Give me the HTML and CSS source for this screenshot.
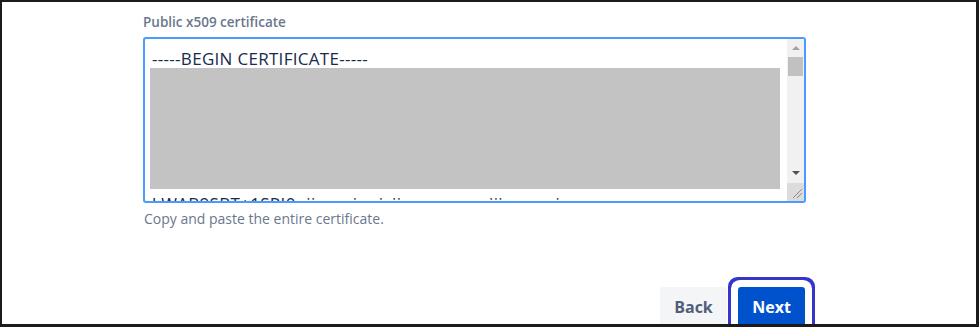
FILE: index.html
```html
<!DOCTYPE html>
<html>
<head>
    <link rel="stylesheet" href="styles.css">
</head>
<body>
    <div class="frame">
        <div class="form">
            <label class="field-label" for="cert">Public x509 certificate</label>
            <div class="cert-box">
                <div class="cert-text" id="cert">
                    <div class="line">-----BEGIN CERTIFICATE-----</div>
                    <!-- certificate body is blanked out in the screenshot -->
                    <div class="redacted"></div>
                    <div class="line line-cut">kWAB9SBT+1SRI0qjjyyypjppjyjjypyypyaqpjjjyypyq.j</div>
                </div>
                <div class="scrollbar">
                    <span class="arrow up"></span>
                    <span class="thumb"></span>
                    <span class="track"></span>
                    <span class="arrow down"></span>
                    <span class="grip">
                        <svg width="17" height="17" viewBox="0 0 17 17">
                            <path d="M6 15 L15 6 M10 15 L15 10" stroke="#8a8a8a" stroke-width="1" fill="none"/>
                        </svg>
                    </span>
                </div>
            </div>
            <p class="hint">Copy and paste the entire certificate.</p>
            <div class="actions">
                <button class="btn btn-back">Back</button>
                <button class="btn btn-next">Next</button>
            </div>
        </div>
    </div>
</body>
</html>
```

FILE: styles.css
```css
body {
    margin: 0;
    padding: 0;
    background: #fff;
    font-family: "Open Sans", "Noto Sans", Arial, sans-serif;
}
.frame {
    width: 979px;
    height: 327px;
    box-sizing: border-box;
    border-style: solid;
    border-color: #1b1b1b;
    border-width: 2px 3px 3px 2px;
    overflow: hidden;
    background: #fff;
}
.form {
    width: 663px;
    margin-left: 141px;
    padding-top: 11px;
}
.field-label {
    display: block;
    font-size: 13.5px;
    line-height: 18px;
    font-weight: 600;
    color: #6b778c;
    margin-bottom: 6px;
}
.cert-box {
    display: flex;
    height: 166px;
    box-sizing: border-box;
    border: 2px solid #4c9aff;
    border-radius: 3px;
    background: #fff;
}
.cert-text {
    flex: 1;
    overflow: hidden;
    padding: 10px 0 0 7px;
    font-size: 17px;
    line-height: 20px;
    letter-spacing: 0.3px;
    color: #172b4d;
    white-space: nowrap;
}
.redacted {
    margin-left: -2px;
    margin-top: -1px;
    width: 630px;
    height: 121px;
    background: #c3c3c3;
}
.line-cut {
    margin-top: 5px;
    height: 7px;
    overflow: hidden;
}
.scrollbar {
    width: 17px;
    display: flex;
    flex-direction: column;
    align-items: center;
    background: #f1f1f1;
}
.arrow {
    width: 0;
    height: 0;
    border-left: 4px solid transparent;
    border-right: 4px solid transparent;
}
.arrow.up {
    margin-top: 7px;
    border-bottom: 4px solid #a3a3a3;
}
.thumb {
    width: 15px;
    height: 19px;
    margin-top: 7px;
    background: #c1c1c1;
}
.track {
    flex: 1;
}
.arrow.down {
    margin-bottom: 8px;
    border-top: 4px solid #505050;
}
.grip {
    width: 17px;
    height: 18px;
    background: #dcdcdc;
    display: block;
}
.grip svg {
    display: block;
}
.hint {
    margin: 7px 0 0 1px;
    font-size: 14px;
    line-height: 18px;
    color: #6b778c;
}
.actions {
    display: flex;
    justify-content: flex-end;
    margin-top: 59px;
    padding-right: 1px;
}
.btn {
    height: 40px;
    width: 67px;
    border: none;
    border-radius: 3px;
    font-family: "Open Sans", "Noto Sans", Arial, sans-serif;
    font-size: 16px;
    font-weight: 700;
    cursor: pointer;
}
.btn-back {
    background: #f4f5f7;
    color: #505f79;
}
.btn-next {
    margin-left: 11px;
    background: #0052cc;
    color: #fff;
    box-shadow: 0 0 0 7px #fff, 0 0 0 10px #3535cc;
}
```
